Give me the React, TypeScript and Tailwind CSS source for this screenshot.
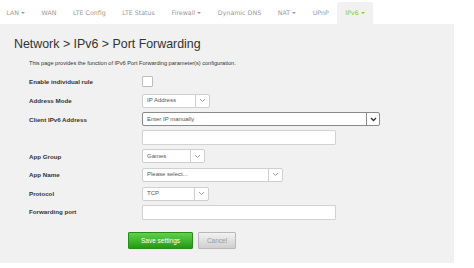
import React from "react";

const Caret = () => (
  <span className="inline-block ml-[2px] align-middle border-l-[2px] border-r-[2px] border-t-[2px] border-l-transparent border-r-transparent border-t-current" />
);

const Chevron = ({ bold }: { bold?: boolean }) => (
  <svg width="7" height="5" viewBox="0 0 7 5">
    <path d="M1 1 L3.5 3.5 L6 1" fill="none" stroke={bold ? "#333" : "#999"} strokeWidth={bold ? 1.4 : 0.9} />
  </svg>
);

const Select = ({ text, w, arrowW = 14, strong }: { text: string; w: string; arrowW?: number; strong?: boolean }) => (
  <div
    className={`flex h-[14px] ${w} bg-white rounded-[2px] border ${strong ? "border-[#8a8a8a]" : "border-[#cfcfcf]"}`}
  >
    <div className="flex-1 flex items-center pl-[4px] text-[6px] text-[#555]">{text}</div>
    <div
      className={`flex items-center justify-center border-l ${strong ? "border-[#8a8a8a]" : "border-[#cfcfcf]"}`}
      style={{ width: arrowW }}
    >
      <Chevron bold={strong} />
    </div>
  </div>
);

const Input = () => <div className="h-[15px] w-[194px] bg-white border border-[#d2d2d2] rounded-[1px]" />;

const Row = ({ label, children }: { label?: string; children: React.ReactNode }) => (
  <div className="flex items-center h-[18.6px]">
    <div className="w-[113px] text-[6.2px] font-bold text-[#333]">{label}</div>
    <div className="flex-1 flex items-center">{children}</div>
  </div>
);

export default function App() {
  const nav: { t: string; c?: boolean; a?: boolean }[] = [
    { t: "LAN", c: true },
    { t: "WAN" },
    { t: "LTE Config" },
    { t: "LTE Status" },
    { t: "Firewall", c: true },
    { t: "Dynamic DNS" },
    { t: "NAT", c: true },
    { t: "UPnP" },
    { t: "IPv6", c: true, a: true },
  ];
  return (
    <div className="w-[474px] h-[268px] bg-white overflow-hidden" style={{ fontFamily: "'Liberation Sans', Arial, sans-serif" }}>
      <div className="flex h-[24px] items-end ml-[-2px]" style={{ fontFamily: "'DejaVu Sans', Verdana, sans-serif" }}>
        {nav.map((n) => (
          <div
            key={n.t}
            className={`h-[22px] flex items-center px-[8.3px] text-[6.3px] ${
              n.a ? "bg-[#f1f1f1] text-[#8cc63e] rounded-t-[2px]" : "text-[#999999]"
            }`}
          >
            {n.t}
            {n.c && <Caret />}
          </div>
        ))}
      </div>
      <div className="w-[454px] h-[239px] bg-[#f1f1f1] pt-[11px] pl-[14px]">
        <h1 className="text-[12.4px] leading-[18px] text-[#333]">Network &gt; IPv6 &gt; Port Forwarding</h1>
        <div className="ml-[15px]">
          <p className="mt-[6px] text-[5.6px] leading-[8px] text-[#333]">
            This page provides the function of IPv6 Port Forwarding parameter(s) configuration.
          </p>
          <div className="mt-[5.7px]">
            <Row label="Enable individual rule">
              <div className="w-[11px] h-[11px] bg-white border border-[#bdbdbd] rounded-[1px]" />
            </Row>
            <Row label="Address Mode">
              <Select text="IP Address" w="w-[68px]" />
            </Row>
            <Row label="Client IPv6 Address">
              <Select text="Enter IP manually" w="w-[238px]" arrowW={13} strong />
            </Row>
            <Row>
              <Input />
            </Row>
            <Row label="App Group">
              <Select text="Games" w="w-[63px]" />
            </Row>
            <Row label="App Name">
              <Select text="Please select..." w="w-[141px]" />
            </Row>
            <Row label="Protocol">
              <Select text="TCP" w="w-[67px]" />
            </Row>
            <Row label="Forwarding port">
              <Input />
            </Row>
          </div>
          <div className="flex gap-[5px] ml-[99px] mt-[11px]">
            <div className="w-[65px] h-[17px] flex items-center justify-center text-[6.5px] text-white border border-[#2a8a1a] rounded-[1px] bg-gradient-to-b from-[#5fd24a] to-[#1f9a14]">
              Save settings
            </div>
            <div className="w-[38px] h-[17px] flex items-center justify-center text-[6.5px] text-[#9a9a9a] border border-[#b8b8b8] rounded-[1px] bg-gradient-to-b from-[#f2f2f2] to-[#cfcfcf]">
              Cancel
            </div>
          </div>
        </div>
      </div>
    </div>
  );
}
